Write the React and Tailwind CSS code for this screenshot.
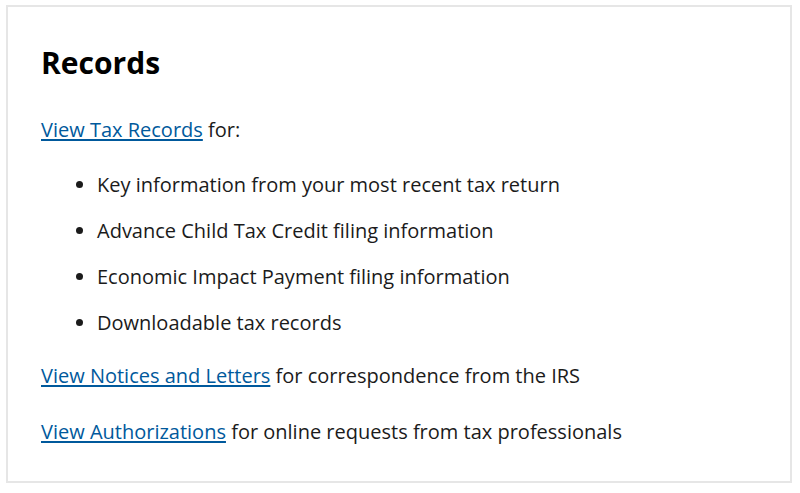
export default function App() {
  return (
    <div className="w-[800px] h-[493px] bg-white pt-[5px] pl-[6px] font-['Open_Sans',sans-serif] text-[#1b1b1b]">
      <div className="w-[786px] h-[478px] border-2 border-[#e6e6e6] pl-[33px] pt-[36px]">
        <h2 className="text-[30px] font-bold leading-[40px] text-black">Records</h2>
        <p className="mt-[32px] text-[20px] leading-[30px]">
          <a href="#" className="text-[#00599c] underline underline-offset-2">View Tax Records</a> for:
        </p>
        <ul className="mt-[25px] ml-[38px] list-disc text-[20px] leading-[30px] flex flex-col gap-[16px] pl-[18px]">
          <li>Key information from your most recent tax return</li>
          <li>Advance Child Tax Credit filing information</li>
          <li>Economic Impact Payment filing information</li>
          <li>Downloadable tax records</li>
        </ul>
        <p className="mt-[23px] text-[20px] leading-[30px]">
          <a href="#" className="text-[#00599c] underline underline-offset-2">View Notices and Letters</a> for correspondence from the IRS
        </p>
        <p className="mt-[26px] text-[20px] leading-[30px]">
          <a href="#" className="text-[#00599c] underline underline-offset-2">View Authorizations</a> for online requests from tax professionals
        </p>
      </div>
    </div>
  );
}
